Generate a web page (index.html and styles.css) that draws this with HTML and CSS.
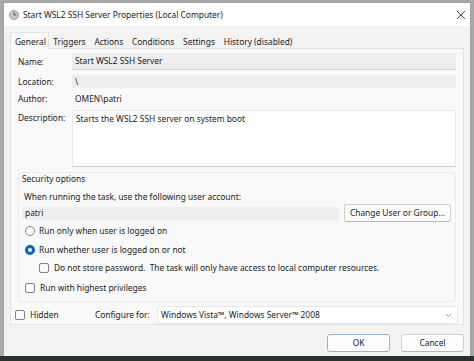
FILE: index.html
```html
<!DOCTYPE html>
<html>
<head>
<meta charset="utf-8">
<link rel="stylesheet" href="styles.css">
</head>
<body>
<div class="desk">
  <div class="win">
    <div class="titlebar">
      <svg class="appicon" width="10" height="10" viewBox="0 0 10 10"><circle cx="5" cy="5" r="4.5" fill="#c9c9c9" stroke="#8a8a8a" stroke-width="0.8"/><path d="M5 2.2V5H7.2" stroke="#444" stroke-width="0.9" fill="none"/></svg>
      <span class="title">Start WSL2 SSH Server Properties (Local Computer)</span>
      <svg class="close" width="10" height="10" viewBox="0 0 10 10"><path d="M1 1L9 9M9 1L1 9" stroke="#333" stroke-width="0.9"/></svg>
    </div>
    <div class="body">
      <div class="tabs">
        <div class="tab sel">General</div>
        <div class="tab">Triggers</div>
        <div class="tab">Actions</div>
        <div class="tab">Conditions</div>
        <div class="tab">Settings</div>
        <div class="tab">History (disabled)</div>
      </div>
      <div class="panel">
        <div class="form">
          <div class="lbl">Name:</div><div class="field ro line">Start WSL2 SSH Server</div>
          <div class="lbl">Location:</div><div class="field ro">\</div>
          <div class="lbl">Author:</div><div class="field plain">OMEN\patri</div>
          <div class="lbl top">Description:</div><div class="field desc">Starts the WSL2 SSH server on system boot</div>
        </div>
        <div class="group">
          <div class="glabel">Security options</div>
          <div class="gtext">When running the task, use the following user account:</div>
          <div class="userrow">
            <div class="field ro user">patri</div>
            <div class="btn chg">Change User or Group...</div>
          </div>
          <div class="opt"><span class="radio"></span>Run only when user is logged on</div>
          <div class="opt r2"><span class="radio on"></span>Run whether user is logged on or not</div>
          <div class="opt indent"><span class="check"></span>Do not store password.&nbsp; The task will only have access to local computer resources.</div>
          <div class="opt high"><span class="check"></span>Run with highest privileges</div>
        </div>
        <div class="bottomrow">
          <div class="opt hid"><span class="check"></span>Hidden</div>
          <div class="cfglbl">Configure for:</div>
          <div class="combo"><span>Windows Vista™, Windows Server™ 2008</span>
            <svg width="7" height="5" viewBox="0 0 7 5"><path d="M1 1L3.5 3.5L6 1" stroke="#888" stroke-width="0.8" fill="none"/></svg>
          </div>
        </div>
      </div>
      <div class="footer">
        <div class="btn fbtn ok">OK</div>
        <div class="btn fbtn">Cancel</div>
      </div>
    </div>
  </div>
  <div class="taskbar"></div>
</div>
</body>
</html>
```
FILE: styles.css
```css
html, body {
  margin: 0;
  padding: 0;
}
body {
  width: 474px;
  height: 361px;
  overflow: hidden;
  background: #a9a9a9;
  font-family: "Noto Sans", "DejaVu Sans", sans-serif;
  font-size: 8.4px;
  line-height: 12px;
  color: #1b1b1b;
}
.desk {
  display: flex;
  flex-direction: column;
  height: 361px;
}
.win {
  margin: 3px 4px 0 4px;
  height: 353px;
  background: #f3f3f3;
  display: flex;
  flex-direction: column;
  box-shadow: 0 0 1px #777;
}
.taskbar {
  flex: 1;
  background: #2b2e35;
}
.titlebar {
  height: 23px;
  background: #ffffff;
  display: flex;
  align-items: center;
  padding: 0 4px 0 5px;
}
.appicon { margin-right: 4px; }
.title {
  flex: 1;
  font-size: 8.4px;
}
.body {
  flex: 1;
  display: flex;
  flex-direction: column;
  padding: 0 6px;
}
.tabs {
  display: flex;
  align-items: flex-end;
  height: 22px;
}
.tab {
  padding: 0 4.4px 0 4.4px;
}
.tab.sel {
  background: #f9f9f9;
  padding: 3px 2px 1px 4px;
  border: 1px solid #e3e3e3;
  border-bottom: none;
  border-radius: 2px 2px 0 0;
  margin-bottom: -1px;
  position: relative;
  z-index: 1;
}
.panel {
  height: 277px;
  box-sizing: border-box;
  background: #f9f9f9;
  border: 1px solid #e3e3e3;
  display: flex;
  flex-direction: column;
  padding: 4px 7px 0 7px;
}
.form {
  display: grid;
  grid-template-columns: 54px 1fr;
  grid-template-rows: 17px 13px 12px 57px;
  row-gap: 5px;
  align-items: center;
}
.lbl.top { align-self: start; padding-top: 2px; }
.field {
  padding: 0 3px;
  display: flex;
  align-items: center;
  height: 100%;
  box-sizing: border-box;
}
.ro { background: #eeeeee; }
.line { border-bottom: 1px solid #d4d4d4; }
.plain { padding-left: 3px; }
.desc {
  background: #ffffff;
  border: 1px solid #e8e8e8;
  border-bottom-color: #cfcfcf;
  align-items: flex-start;
  padding: 2px 3px;
}
.group {
  margin-top: 5px;
  border: 1px solid #ebebeb;
  border-radius: 3px;
  padding: 0 4px 4px 3px;
  height: 130px;
  box-sizing: border-box;
}
.glabel { margin-bottom: 6px; }
.gtext { margin-bottom: 1px; padding-left: 2px; }
.userrow {
  display: flex;
  align-items: center;
  gap: 5px;
}
.user { flex: 1; height: 13px; padding-left: 3px; }
.btn {
  background: #fdfdfd;
  border: 1px solid #d0d0d0;
  border-bottom-color: #b5b5b5;
  border-radius: 3px;
  height: 18px;
  box-sizing: border-box;
  padding: 0 4px;
  display: flex;
  align-items: center;
  justify-content: center;
}
.chg { width: 107px; }
.opt {
  display: flex;
  align-items: center;
  height: 18px;
  padding-left: 3px;
}
.opt.r2 { margin-top: 1px; }
.opt.high { margin-top: 2px; }
.opt.indent { padding-left: 17px; }
.radio {
  width: 10px;
  height: 10px;
  border: 1px solid #858585;
  border-radius: 50%;
  margin-right: 4px;
  box-sizing: border-box;
  background: #fafafa;
}
.radio.on {
  border: 3px solid #0067c0;
  background: #fff;
}
.check {
  width: 10px;
  height: 10px;
  border: 1px solid #858585;
  border-radius: 2px;
  margin-right: 5px;
  box-sizing: border-box;
  background: #fafafa;
}
.bottomrow {
  display: flex;
  align-items: center;
  margin-top: 4px;
  margin-left: -3px;
}
.opt.hid { padding-left: 0; width: 80px; }
.cfglbl { width: 62px; }
.combo {
  flex: 1;
  height: 18px;
  background: #ffffff;
  border: 1px solid #e8e8e8;
  border-radius: 3px;
  box-sizing: border-box;
  display: flex;
  align-items: center;
  justify-content: space-between;
  padding: 0 5px 0 3px;
  margin-right: -2px;
}
.footer {
  display: flex;
  justify-content: flex-end;
  gap: 11px;
  padding-top: 9px;
}
.fbtn { width: 63px; }
.fbtn.ok { border: 1px solid #8db5dc; }
```
